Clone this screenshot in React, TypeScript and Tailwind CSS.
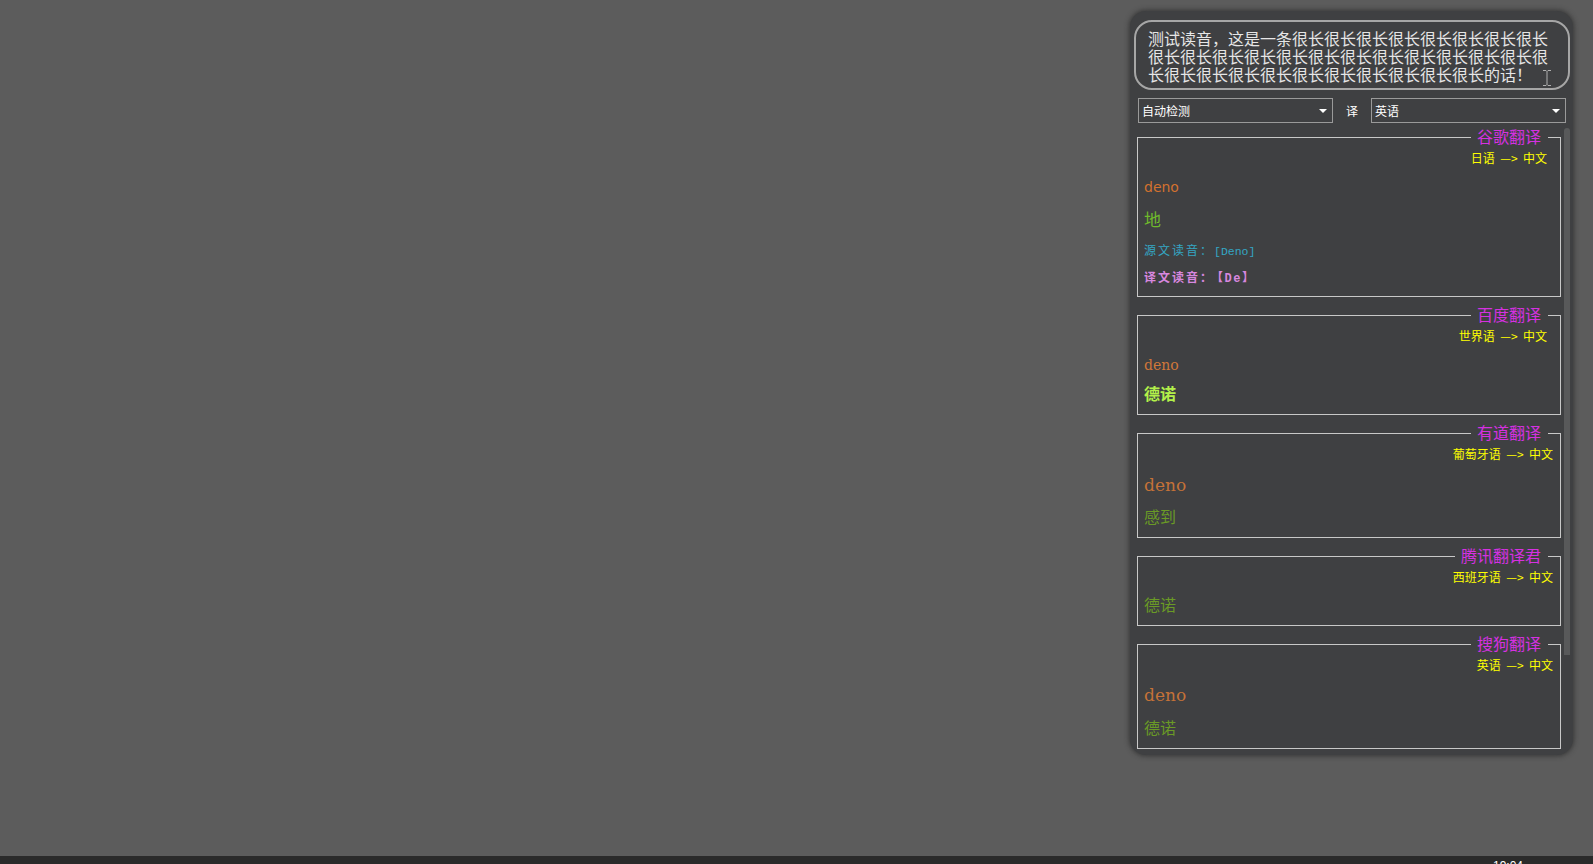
function Box({ title, lang, wide, pb, children }: { title: string; lang: string; wide?: boolean; pb: string; children: React.ReactNode }) {
  return (
    <fieldset className={`border border-[#c8c8c8] ml-[3px] w-[424px] px-[6px] shrink-0 ${pb}`}>
      <legend className="ml-auto mr-[6px] pl-[6px] pr-[7px] h-[18px] leading-[16px] text-[16px] text-[#d531e0] font-['Noto_Sans_CJK_SC',sans-serif]">{title}</legend>
      <div className={`text-right text-[12px] leading-[16px] text-[#ffff00] mt-[4px] whitespace-pre ${wide ? "pr-[1px]" : "pr-[7px]"} font-['Noto_Sans_CJK_SC',sans-serif]`}>{lang}</div>
      {children}
    </fieldset>
  );
}

export default function App() {
  const text = "测试读音，这是一条" + "很长".repeat(8) + "很长".repeat(12) + "很" + "长" + "很长".repeat(10) + "的话！";
  return (
    <div className="h-screen w-full flex flex-col bg-[#5c5c5c] overflow-hidden font-['Noto_Sans_CJK_SC',sans-serif]">
      <main className="flex-1 flex justify-end items-start pt-[11px] pr-[20px]">
        <div className="relative w-[443px] h-[744px] bg-[#3f4042] rounded-[16px] shadow-[0_0_5px_1px_rgba(40,40,40,0.7)] pt-[9px] pl-[4px] flex flex-col">
          <div className="relative shrink-0 w-[436px] h-[70px] border-2 border-[#a6a6a6] rounded-[18px] pl-[12px] pt-[7px]">
            <p className="w-[402px] break-all text-[16px] leading-[18px] text-[#e6e6e6] font-['Noto_Sans_CJK_SC',sans-serif]">{text}</p>
            <svg className="absolute right-[17px] top-[48px]" width="8" height="16" viewBox="0 0 8 16" fill="none" stroke="#b0b0b0" strokeWidth="1">
              <path d="M0 .5h3l1 1 1-1h3M4 1.5v13M0 15.5h3l1-1 1 1h3" />
            </svg>
          </div>
          <div className="flex items-center mt-[8px] ml-[4px] h-[25px] shrink-0">
            <div className="w-[195px] h-[25px] border border-[#9a9a9a] flex items-center justify-between pl-[3px] pr-[5px] text-[12px] text-white">
              <span>自动检测</span>
              <span className="w-0 h-0 border-x-[4px] border-x-transparent border-t-[4px] border-t-white" />
            </div>
            <span className="w-[38px] text-center text-[12px] text-white">译</span>
            <div className="w-[195px] h-[25px] border border-[#9a9a9a] flex items-center justify-between pl-[3px] pr-[5px] text-[12px] text-white">
              <span>英语</span>
              <span className="w-0 h-0 border-x-[4px] border-x-transparent border-t-[4px] border-t-white" />
            </div>
          </div>
          <div className="relative flex flex-col gap-[9px] mt-[5px]">
            <Box title="谷歌翻译" lang="日语  —>  中文" pb="pb-[9px]">
              <div className="text-[14px] leading-[20px] text-[#d2712f] font-['DejaVu_Sans',sans-serif] mt-[11px]">deno</div>
              <div className="text-[17px] leading-[22px] text-[#6fba2c] mt-[11px]">地</div>
              <div className="text-[11.5px] leading-[16px] text-[#34a6c4] font-['Liberation_Mono','Noto_Sans_CJK_SC',monospace] mt-[14px]"><span className="text-[12px] tracking-[2px]">源文读音：</span>[Deno]</div>
              <div className="text-[12px] leading-[16px] text-[#d787df] font-bold font-['Liberation_Mono','Noto_Sans_CJK_SC',monospace] mt-[11px]"><span className="tracking-[2px]">译文读音：</span><span className="pl-[3px] tracking-[1.5px]">【De】</span></div>
            </Box>
            <Box title="百度翻译" lang="世界语  —>  中文" pb="pb-[9px]">
              <div className="text-[14px] leading-[20px] text-[#d0773a] font-['DejaVu_Serif',serif] mt-[11px]">deno</div>
              <div className="text-[16px] leading-[24px] font-bold text-[#b3f04a] mt-[6px]">德诺</div>
            </Box>
            <Box title="有道翻译" lang="葡萄牙语  —>  中文" wide pb="pb-[9px]">
              <div className="text-[17px] leading-[24px] text-[#c47238] font-['DejaVu_Serif',serif] mt-[11px]">deno</div>
              <div className="text-[16px] leading-[24px] text-[#6a9a26] mt-[7px]">感到</div>
            </Box>
            <Box title="腾讯翻译君" lang="西班牙语  —>  中文" wide pb="pb-[9px]">
              <div className="text-[16px] leading-[24px] text-[#6a9a26] mt-[7px]">德诺</div>
            </Box>
            <Box title="搜狗翻译" lang="英语  —>  中文" wide pb="pb-[9px]">
              <div className="text-[17px] leading-[24px] text-[#c47238] font-['DejaVu_Serif',serif] mt-[10px]">deno</div>
              <div className="text-[16px] leading-[24px] text-[#6a9a26] mt-[8px]">德诺</div>
            </Box>
            <div className="absolute left-[430px] top-[0px] w-[6px] h-[527px] bg-[#58595a] rounded-t-[3px]" />
          </div>
        </div>
      </main>
      <footer className="h-[8px] bg-[#2a2a2a] relative overflow-hidden">
        <span className="absolute left-[1493px] top-[3px] text-[12px] leading-[14px] text-white font-['Liberation_Sans',sans-serif]">19:04</span>
      </footer>
    </div>
  );
}
